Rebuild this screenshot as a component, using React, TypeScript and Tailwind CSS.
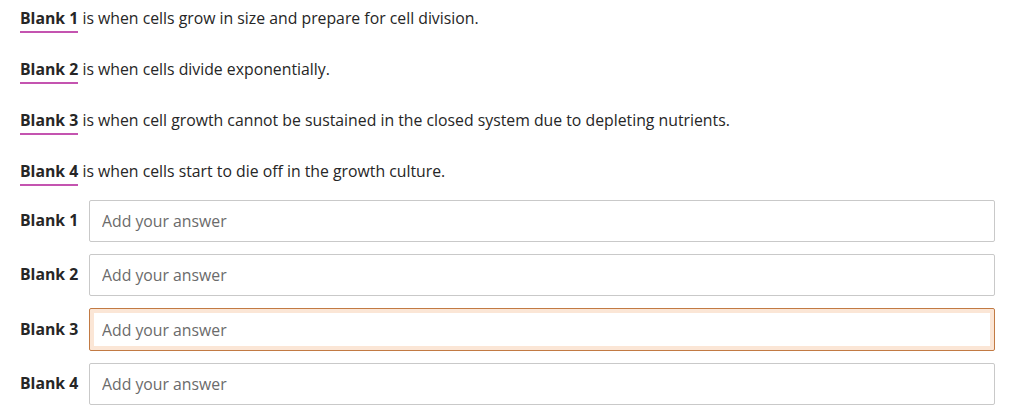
const statements = [
  { n: 1, text: "is when cells grow in size and prepare for cell division." },
  { n: 2, text: "is when cells divide exponentially." },
  { n: 3, text: "is when cell growth cannot be sustained in the closed system due to depleting nutrients." },
  { n: 4, text: "is when cells start to die off in the growth culture." },
];

export default function App() {
  return (
    <div
      className="bg-white min-h-[415px] w-[1024px] text-[#262626]"
      style={{ fontFamily: '"Open Sans", "Noto Sans", sans-serif' }}
    >
      <div className="pl-5 pr-[29px] pt-[6px]">
        <div className="flex flex-col gap-[27px]">
          {statements.map((s) => (
            <p key={s.n} className="text-[15.8px] leading-[24px]">
              <span className="font-bold border-b-2 border-[#c454b0] pb-[2px]">Blank {s.n}</span>{" "}
              {s.text}
            </p>
          ))}
        </div>

        <div className="mt-[17px] flex flex-col gap-[12px]">
          {[1, 2, 3, 4].map((n) => (
            <div key={n} className="flex items-center gap-[10px]">
              <label className="w-[59px] shrink-0 text-[15.8px] font-bold">Blank {n}</label>
              <input
                placeholder="Add your answer"
                className={
                  n === 3
                    ? "flex-1 h-[43px] rounded-[2px] border border-[#c27a43] shadow-[inset_0_0_0_4px_#fbe6d6] px-3 text-[15.8px] placeholder:text-[#6b6b6b] outline-none"
                    : "flex-1 h-[42px] rounded-[2px] border border-[#c9c9c9] px-3 text-[15.8px] placeholder:text-[#6b6b6b] outline-none"
                }
              />
            </div>
          ))}
        </div>
      </div>
    </div>
  );
}
